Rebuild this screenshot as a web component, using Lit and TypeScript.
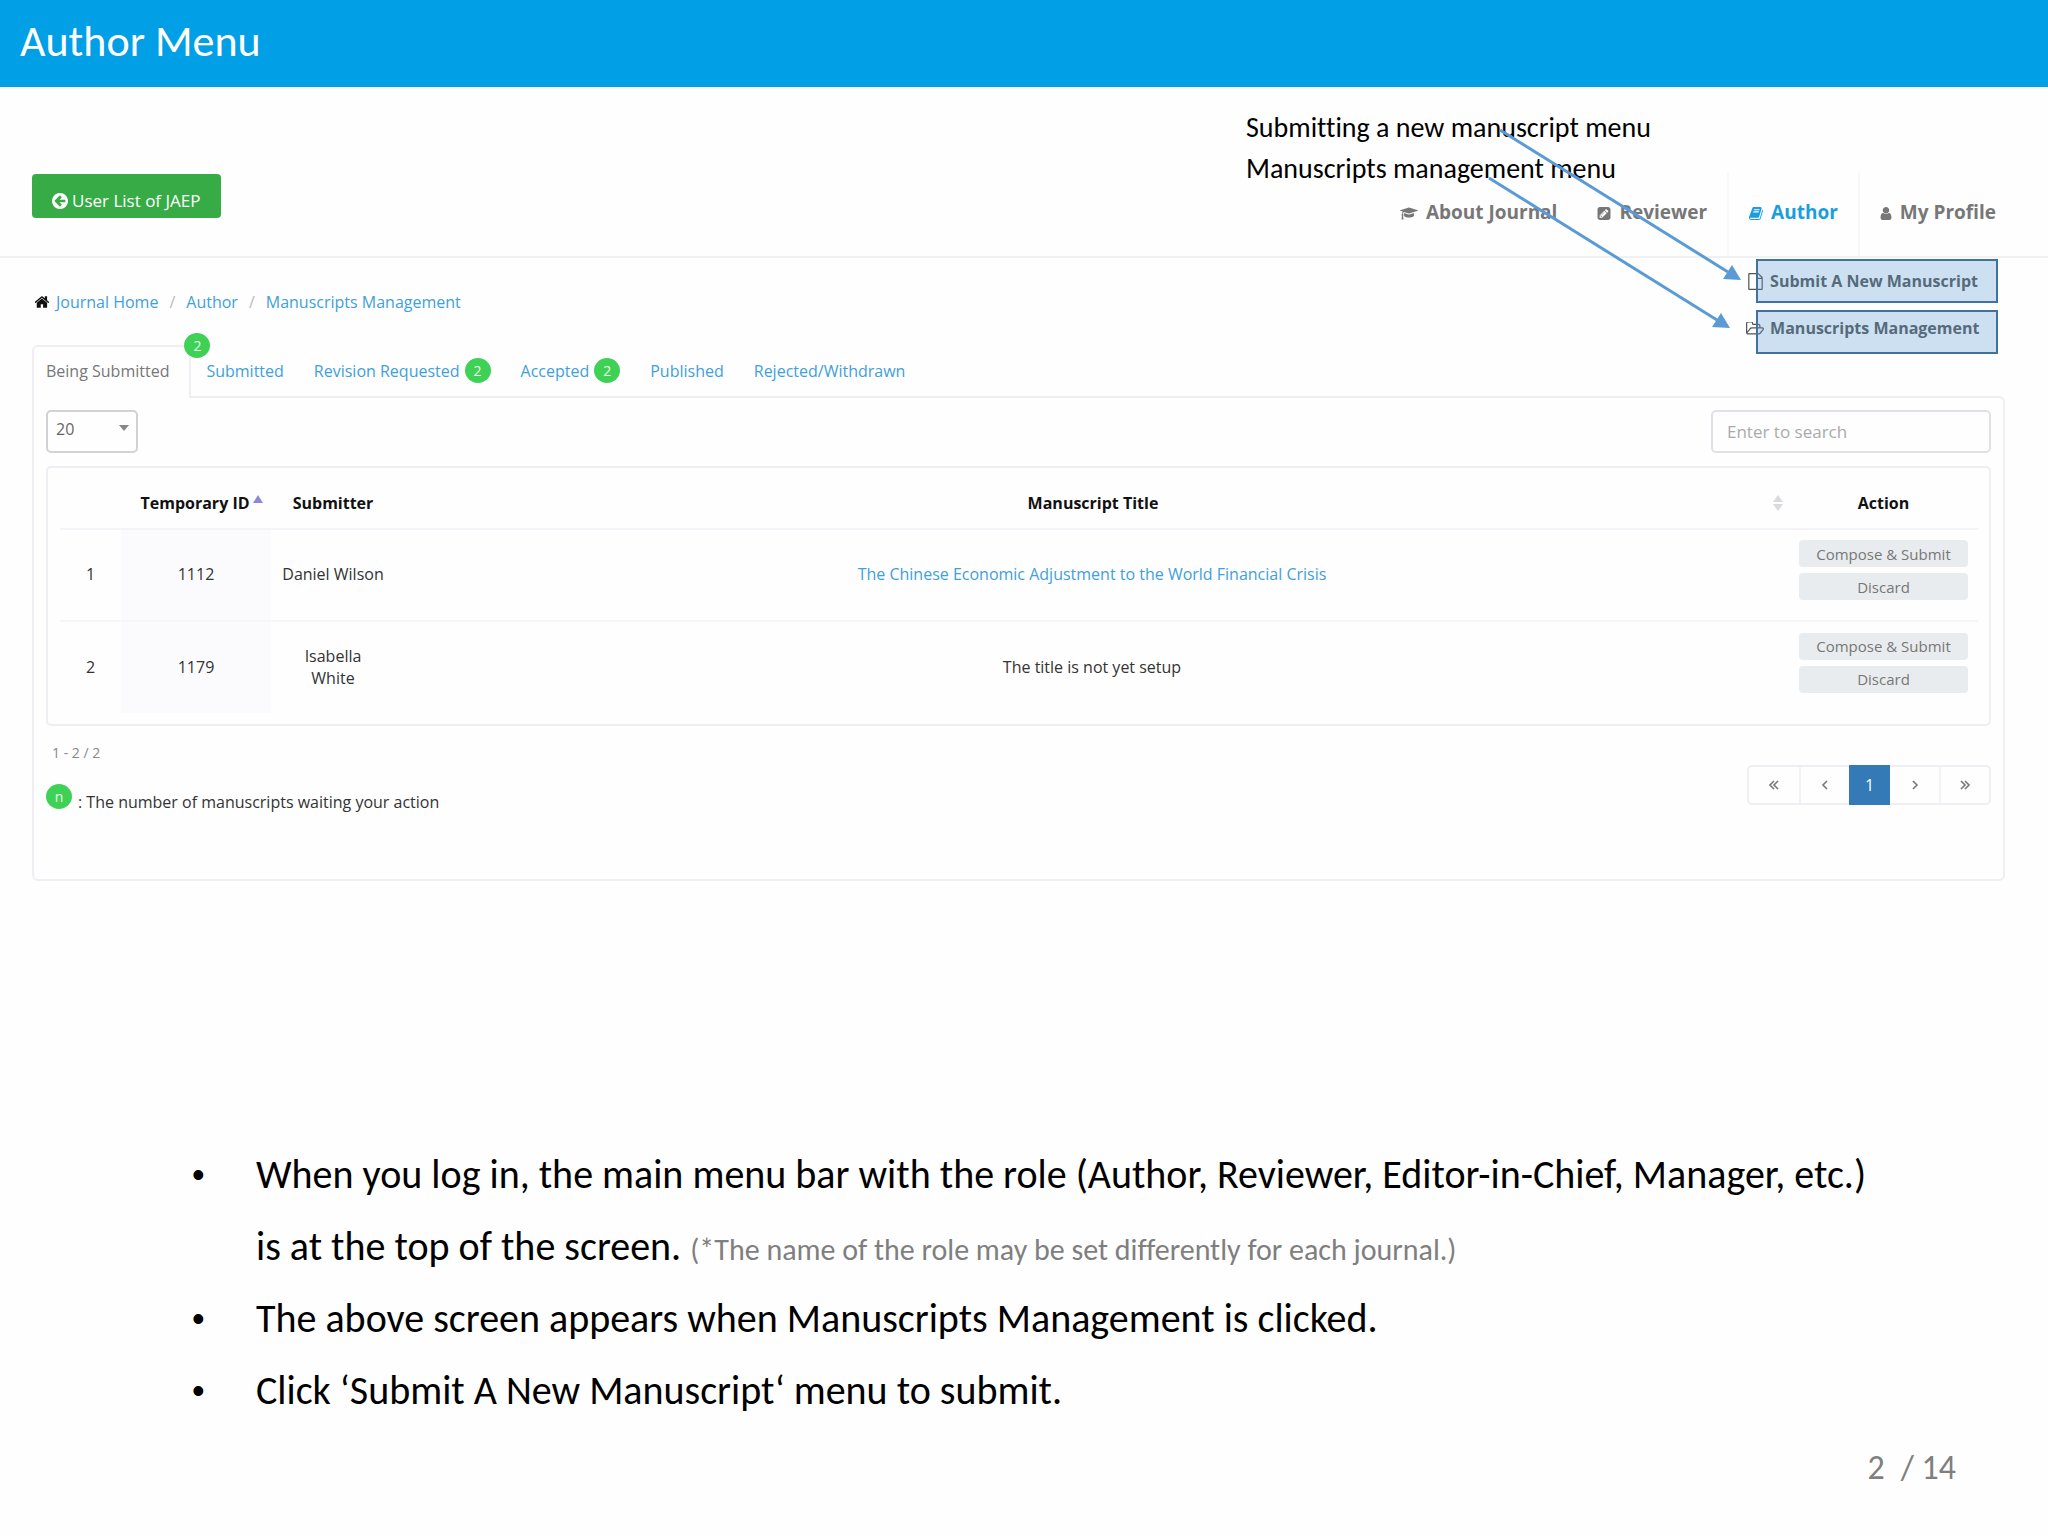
import { LitElement, html, css, nothing } from "lit";
import { customElement, state } from "lit/decorators.js";
import { classMap } from "lit/directives/class-map.js";

interface Glyph {
  box: string;
  d: string;
}

const GLYPHS: Record<string, Glyph> = {
  back: {
    box: "128 128 1536 1536",
    d: "M1408 960v-128q0-26-19-45t-45-19h-502l189-189q19-19 19-45t-19-45l-91-91q-18-18-45-18t-45 18l-362 362-91 91q-18 18-18 45t18 45l91 91 362 362q18 18 45 18t45-18l91-91q18-18 18-45t-18-45l-189-189h502q26 0 45-19t19-45zm256-64q0 209-103 385.5t-279.5 279.5-385.5 103-385.5-103-279.5-279.5-103-385.5 103-385.5 279.5-279.5 385.5-103 385.5 103 279.5 279.5 103 385.5z",
  },
  home: {
    box: "64 240 1664 1300",
    d: "M1408 992v480q0 26-19 45t-45 19h-384v-384h-256v384h-384q-26 0-45-19t-19-45v-480q0-1 .5-3t.5-3l575-474 575 474q1 2 1 6zm223-69l-62 74q-8 9-21 11h-3q-13 0-21-7l-692-577-692 577q-12 8-24 7-13-2-21-11l-62-74q-8-10-7-23.5t11-21.5l719-599q32-26 76-26t76 26l244 204v-195q0-14 9-23t23-9h192q14 0 23 9t9 23v408l219 182q10 8 11 21.5t-7 23.5z",
  },
  cap: {
    box: "0 128 2304 1536",
    d: "M1774 836l18 316q4 69-82 128t-235 93.5-323 34.5-323-34.5-235-93.5-82-128l18-316 574 181q22 7 48 7t48-7zm530-324q0 23-22 31l-1120 352q-4 1-10 1t-10-1l-652-206q-43 34-71 111.5t-34 178.5q63 36 63 109 0 69-58 107l58 433q2 14-8 25-9 11-24 11h-192q-15 0-24-11-10-11-8-25l58-433q-58-38-58-107 0-73 65-111 11-207 98-330l-333-104q-22-8-22-31t22-31l1120-352q4-1 10-1t10 1l1120 352q22 8 22 31z",
  },
  pencil: {
    box: "0 128 1536 1536",
    d: "M404 1108l152 152-52 52h-56v-96h-96v-56zm414-390q14 13-3 30l-291 291q-17 17-30 3-14-13 3-30l291-291q17-17 30-3zm-274 690l544-544-288-288-544 544v288h288zm608-608l92-92q28-28 28-68t-28-68l-152-152q-28-28-68-28t-68 28l-92 92zm384-384v960q0 119-84.5 203.5t-203.5 84.5h-960q-119 0-203.5-84.5t-84.5-203.5v-960q0-119 84.5-203.5t203.5-84.5h960q119 0 203.5 84.5t84.5 203.5z",
  },
  book: {
    box: "64 128 1664 1536",
    d: "M1703 478q40 57 18 129l-275 906q-19 64-76.5 107.5t-122.5 43.5h-923q-77 0-148.5-53.5t-99.5-131.5q-24-67-2-127 0-4 3-27t4-37q1-8-3-21.5t-3-19.5q2-11 8-21t16.5-23.5 16.5-23.5q23-38 45-91.5t30-91.5q3-10 .5-30t-.5-28q3-11 17-28t17-23q21-36 42-92t25-90q1-9-2.5-32t.5-28q4-13 22-30.5t22-22.5q19-26 42.5-84.5t27.5-96.5q1-8-3-25.5t-2-26.5q2-8 9-18t18-23 17-21q8-12 16.5-30.5t15-35 16-36 19.5-32 26.5-23.5 36-11.5 47.5 5.5l-1 3q38-9 51-9h761q74 0 114 56t18 130l-274 906q-36 119-71.5 153.5t-128.5 34.5h-869q-27 0-38 15-11 16-1 43 24 70 144 70h923q29 0 56-15.5t35-41.5l300-987q7-22 5-57 38 15 59 43zm-1064 2q-4 13 2 22.5t20 9.5h608q13 0 25.5-9.5t16.5-22.5l21-64q4-13-2-22.5t-20-9.5h-608q-13 0-25.5 9.5t-16.5 22.5zm-83 256q-4 13 2 22.5t20 9.5h608q13 0 25.5-9.5t16.5-22.5l21-64q4-13-2-22.5t-20-9.5h-608q-13 0-25.5 9.5t-16.5 22.5z",
  },
  user: {
    box: "256 128 1280 1536",
    d: "M1536 1399q0 109-62.5 187t-150.5 78h-854q-88 0-150.5-78t-62.5-187q0-85 8.5-160.5t31.5-152 58.5-131 94-89 134.5-34.5q131 128 313 128t313-128q76 0 134.5 34.5t94 89 58.5 131 31.5 152 8.5 160.5zm-256-887q0 159-112.5 271.5t-271.5 112.5-271.5-112.5-112.5-271.5 112.5-271.5 271.5-112.5 271.5 112.5 112.5 271.5z",
  },
  file: {
    box: "128 0 1536 1792",
    d: "M1596 380q28 28 48 76t20 88v1152q0 40-28 68t-68 28h-1344q-40 0-68-28t-28-68v-1600q0-40 28-68t68-28h896q40 0 88 20t76 48zm-444-244v376h376q-10-29-22-41l-313-313q-12-12-41-22zm384 1528v-1024h-416q-40 0-68-28t-28-68v-416h-768v1536h1280z",
  },
  folder: {
    box: "64 256 1909 1280",
    d: "M1845 931q0-35-53-35h-1088q-40 0-85.5 21.5t-71.5 52.5l-294 363q-18 24-18 40 0 35 53 35h1088q40 0 86-22t71-53l294-363q18-22 18-39zm-1141-163h768v-160q0-40-28-68t-68-28h-576q-40 0-68-28t-28-68v-64q0-40-28-68t-68-28h-320q-40 0-68 28t-28 68v853l256-315q44-53 116-87.5t140-34.5zm1269 163q0 62-46 120l-295 363q-43 53-116 87.5t-140 34.5h-1088q-92 0-158-66t-66-158v-960q0-92 66-158t158-66h320q92 0 158 66t66 158v32h544q92 0 158 66t66 158v160h192q54 0 99 24.5t67 70.5q15 32 15 68z",
  },
};

const icon = (name: string, width: number, height: number) => html`
  <svg class="icon" width=${width} height=${height} viewBox=${GLYPHS[name].box} aria-hidden="true">
    <path fill="currentColor" d=${GLYPHS[name].d}></path>
  </svg>
`;

const chevrons = (path: string) => html`
  <svg class="icon" width="12" height="12" viewBox="0 0 12 12" aria-hidden="true">
    <path d=${path} fill="none" stroke="currentColor" stroke-width="1.6"></path>
  </svg>
`;

const TABS = [
  { label: "Being Submitted", count: 2 },
  { label: "Submitted", count: 0 },
  { label: "Revision Requested", count: 2 },
  { label: "Accepted", count: 2 },
  { label: "Published", count: 0 },
  { label: "Rejected/Withdrawn", count: 0 },
];

const ROWS = [
  {
    id: "1112",
    submitter: "Daniel Wilson",
    title: "The Chinese Economic Adjustment to the World Financial Crisis",
  },
  { id: "1179", submitter: "Isabella\nWhite", title: "" },
];

@customElement("app-root")
export class AppRoot extends LitElement {
  @state() private active = 0;

  static styles = css`
    :host {
      display: block;
      font-family: "Open Sans", "Noto Sans", sans-serif;
      font-size: 16px;
      line-height: 22px;
      color: #333;
    }
    * {
      box-sizing: border-box;
    }
    a {
      color: #3fa0dc;
      text-decoration: none;
    }
    button {
      font: inherit;
      border: 0;
      background: none;
      padding: 0;
      cursor: pointer;
    }
    .icon {
      flex: none;
      display: block;
    }
    .slide {
      position: relative;
      display: flex;
      flex-direction: column;
      min-height: 100vh;
      background: #fefefe;
    }
    .calibri {
      font-family: Carlito, Lato, "Open Sans", sans-serif;
      font-variant-ligatures: none;
    }
    .banner {
      background: #009fe6;
      padding: 13px 20px 18px;
    }
    .banner h1 {
      margin: 0;
      font-size: 44px;
      line-height: 56px;
      font-weight: 400;
      color: #fff;
    }

    /* top bar */
    .topbar {
      display: flex;
      justify-content: space-between;
      align-items: flex-start;
      padding: 85px 32px 0;
      border-bottom: 2px solid #f1f1f3;
    }
    .back {
      display: flex;
      align-items: center;
      gap: 4px;
      margin-top: 2px;
      padding: 16px 20px 6px;
      border-radius: 4px;
      background: #36ab46;
      color: #fff;
      font-size: 17px;
    }
    .menu {
      display: flex;
    }
    .menu-item {
      position: relative;
      border: 0 solid #f8f8fb;
    }
    .menu-item.open {
      border-width: 0 2px;
    }
    .menu-link {
      display: flex;
      align-items: center;
      gap: 8px;
      padding: 28px 20px 32px;
      font-size: 19px;
      line-height: 24px;
      font-weight: 700;
      color: #777;
    }
    .menu-item.open .menu-link {
      color: #1a9edd;
    }
    .menu-link .icon {
      margin-top: 2px;
    }
    .dropdown {
      position: absolute;
      top: 100%;
      left: 0;
      width: 271px;
      display: flex;
      flex-direction: column;
      gap: 7px;
      padding: 3px 0 0 17px;
    }
    .dropdown a {
      position: relative;
      display: flex;
      align-items: center;
      gap: 6px;
      height: 44px;
      font-weight: 700;
      color: #555;
      white-space: nowrap;
    }
    .dropdown a.upper {
      padding-bottom: 8px;
    }
    .dropdown .slot {
      display: flex;
      justify-content: center;
      width: 18px;
    }
    .mark {
      position: absolute;
      inset: 0 2px 0 10px;
      border: 2px solid #41719c;
      background: rgba(91, 155, 213, 0.3);
    }

    /* annotation layer */
    .notes {
      position: absolute;
      top: 107px;
      right: 390px;
      width: 412px;
      margin: 0;
      font-size: 28px;
      line-height: 41px;
      color: #000;
      white-space: nowrap;
    }
    .arrows {
      position: absolute;
      top: 120px;
      right: 298px;
    }

    /* breadcrumb */
    .crumbs {
      display: flex;
      align-items: center;
      gap: 11px;
      padding: 33px 35px 0;
      color: #bbb;
    }
    .crumbs .first {
      display: flex;
      align-items: center;
      gap: 6px;
      color: #111;
    }

    /* tabs and panel */
    .work {
      padding: 32px 43px 0 32px;
    }
    .tabs {
      display: flex;
      align-items: flex-end;
    }
    .tab {
      position: relative;
      display: flex;
      align-items: center;
      gap: 5px;
      height: 51px;
      padding: 0 15px;
      color: #3fa0dc;
    }
    .tab.active {
      z-index: 1;
      height: 53px;
      padding: 0 15px 4px 12px;
      margin-bottom: -2px;
      border: 2px solid #f0eef3;
      border-bottom: 0;
      border-radius: 6px 0 0 0;
      background: #fefefe;
      color: #777;
    }
    .badge {
      display: flex;
      align-items: center;
      justify-content: center;
      width: 26px;
      height: 25px;
      border-radius: 50%;
      background: #3fd155;
      color: #eafbec;
      font-size: 14px;
      line-height: 18px;
    }
    .tab.active .badge {
      position: absolute;
      top: -14px;
      right: -21px;
    }
    .panel {
      border: 2px solid #f0eef3;
      border-radius: 0 6px 6px 6px;
      padding: 12px 12px 66px;
    }
    .tools {
      display: flex;
      justify-content: space-between;
      margin-bottom: 13px;
    }
    .size {
      position: relative;
      width: 92px;
    }
    .size select {
      appearance: none;
      width: 100%;
      height: 43px;
      padding: 0 8px 6px;
      border: 2px solid #d2d2d6;
      border-radius: 5px;
      background: #fefefe;
      font: inherit;
      color: #666;
    }
    .size .icon {
      position: absolute;
      top: 15px;
      right: 9px;
      color: #888;
      pointer-events: none;
    }
    .search {
      width: 280px;
      height: 43px;
      padding: 0 14px;
      border: 2px solid #e2e0e6;
      border-radius: 5px;
      background: #fefefe;
      font: inherit;
      font-size: 17px;
      color: #555;
    }
    .search::placeholder {
      color: #aaa;
      opacity: 1;
    }
    .grid {
      border: 2px solid #f0eef3;
      border-radius: 5px;
      padding: 10px 11px 11px 12px;
    }
    table {
      width: 100%;
      table-layout: fixed;
      border-collapse: collapse;
      text-align: center;
    }
    .c-no {
      width: 61px;
    }
    .c-id {
      width: 150px;
    }
    .c-by {
      width: 124px;
    }
    .c-act {
      width: 189px;
    }
    th {
      height: 51px;
      padding: 0;
      font-weight: 700;
      color: #111;
      border-bottom: 2px solid #f4f4f8;
    }
    td {
      height: 92px;
      padding: 0 10px 2px;
      border-bottom: 2px solid #f6f6fa;
    }
    td.by {
      padding: 0 8px 2px;
      white-space: pre-line;
    }
    tr:last-child td {
      border-bottom: 0;
    }
    td.id {
      background: #fbfbfe;
    }
    .head {
      display: flex;
      align-items: center;
      justify-content: center;
    }
    .head.asc {
      align-items: flex-start;
      gap: 3px;
      padding-left: 11px;
    }
    .head .icon.sort {
      margin-left: auto;
      margin-right: 6px;
    }
    .head .label {
      flex: 1;
      padding-left: 18px;
    }
    .head.asc .icon {
      margin-top: 3px;
    }
    .acts {
      display: flex;
      flex-direction: column;
      gap: 6px;
      padding-bottom: 8px;
    }
    .act {
      height: 27px;
      border-radius: 4px;
      background: #e9ecee;
      color: #777;
      font-size: 15px;
      line-height: 20px;
    }
    .foot {
      display: flex;
      justify-content: space-between;
      align-items: flex-start;
    }
    .range {
      margin: 16px 0 20px;
      padding-left: 6px;
      font-size: 14px;
      line-height: 22px;
      color: #888;
    }
    .legend {
      display: flex;
      align-items: flex-start;
      gap: 6px;
      margin: 0;
    }
    .legend span:last-child {
      padding-top: 7px;
    }
    .pager {
      display: flex;
      margin-top: 39px;
      border: 2px solid #f0eef3;
      border-radius: 5px;
    }
    .pager button {
      display: flex;
      align-items: center;
      justify-content: center;
      width: 50px;
      height: 36px;
      color: #777;
    }
    .pager button + button {
      border-left: 2px solid #f4f2f7;
    }
    .pager button.on {
      width: 41px;
      height: 40px;
      margin: -2px 0;
      border: 0;
      background: #337ab7;
      color: #fff;
    }
    .pager button.on + button {
      border: 0;
      width: 49px;
    }

    /* explanation */
    .points {
      margin: 258px 0 0;
      padding: 0 80px 0 192px;
      list-style: none;
      font-size: 40px;
      line-height: 72px;
      color: #000;
    }
    .points li {
      display: flex;
    }
    .points li::before {
      content: "•";
      flex: none;
      width: 64px;
      font-family: "Liberation Sans", sans-serif;
      font-size: 36px;
    }
    .points small {
      font-size: 30px;
      line-height: 1;
      color: #7f7f7f;
    }
    .page-no {
      display: flex;
      align-items: baseline;
      justify-content: flex-end;
      gap: 16px;
      margin-top: auto;
      padding: 0 92px 48px;
      font-size: 34px;
      line-height: 40px;
      color: #7f7f7f;
    }
  `;

  private renderMenu() {
    return html`
      <nav class="menu" aria-label="Main">
        <div class="menu-item"><a class="menu-link" href="#about">${icon("cap", 18, 13)}About Journal</a></div>
        <div class="menu-item"><a class="menu-link" href="#reviewer">${icon("pencil", 14, 13)}Reviewer</a></div>
        <div class="menu-item open">
          <a class="menu-link" href="#author">${icon("book", 14, 13)}Author</a>
          <div class="dropdown">
            <a href="#submit">
              <span class="slot">${icon("file", 15, 17)}</span>Submit A New Manuscript<span class="mark"></span>
            </a>
            <a class="upper" href="#manage">
              <span class="slot">${icon("folder", 18, 13)}</span>Manuscripts Management<span class="mark"></span>
            </a>
          </div>
        </div>
        <div class="menu-item"><a class="menu-link" href="#profile">${icon("user", 12, 13)}My Profile</a></div>
      </nav>
    `;
  }

  private renderTable() {
    return html`
      <div class="grid">
        <table>
          <colgroup>
            <col class="c-no" /><col class="c-id" /><col class="c-by" /><col /><col class="c-act" />
          </colgroup>
          <thead>
            <tr>
              <th></th>
              <th>
                <div class="head asc">
                  Temporary ID
                  <svg class="icon" width="10" height="8" viewBox="0 0 10 8" aria-hidden="true">
                    <path d="M5 0L10 8H0Z" fill="#8d86dc"></path>
                  </svg>
                </div>
              </th>
              <th>Submitter</th>
              <th>
                <div class="head">
                  <span class="label">Manuscript Title</span>
                  <svg class="icon sort" width="10" height="16" viewBox="0 0 10 16" aria-hidden="true">
                    <path d="M5 0L10 7H0ZM0 9H10L5 16Z" fill="#dadade"></path>
                  </svg>
                </div>
              </th>
              <th>Action</th>
            </tr>
          </thead>
          <tbody>
            ${ROWS.map(
              (row, i) => html`
                <tr>
                  <td>${i + 1}</td>
                  <td class="id">${row.id}</td>
                  <td class="by">${row.submitter}</td>
                  <td>${row.title ? html`<a href="#paper">${row.title}</a>` : "The title is not yet setup"}</td>
                  <td>
                    <div class="acts">
                      <button class="act" type="button">Compose &amp; Submit</button>
                      <button class="act" type="button">Discard</button>
                    </div>
                  </td>
                </tr>
              `
            )}
          </tbody>
        </table>
      </div>
    `;
  }

  render() {
    return html`
      <div class="slide">
        <header class="banner calibri"><h1>Author Menu</h1></header>

        <div class="topbar">
          <a class="back" href="#users">${icon("back", 16, 16)}User List of JAEP</a>
          ${this.renderMenu()}
        </div>

        <nav class="crumbs" aria-label="Breadcrumb">
          <span class="first">${icon("home", 15, 12)}<a href="#home">Journal Home</a></span>
          <span>/</span>
          <a href="#author">Author</a>
          <span>/</span>
          <a href="#manage">Manuscripts Management</a>
        </nav>

        <main class="work">
          <div class="tabs" role="tablist">
            ${TABS.map(
              (tab, i) => html`
                <button
                  type="button"
                  role="tab"
                  aria-selected=${i === this.active ? "true" : "false"}
                  class=${classMap({ tab: true, active: i === this.active })}
                  @click=${() => (this.active = i)}
                >
                  ${tab.label}${tab.count ? html`<span class="badge">${tab.count}</span>` : nothing}
                </button>
              `
            )}
          </div>

          <section class="panel">
            <div class="tools">
              <div class="size">
                <select aria-label="Rows per page">
                  <option>20</option>
                </select>
                <svg class="icon" width="10" height="6" viewBox="0 0 10 6" aria-hidden="true">
                  <path d="M0 0H10L5 6Z" fill="currentColor"></path>
                </svg>
              </div>
              <input class="search" type="search" placeholder="Enter to search" aria-label="Search manuscripts" />
            </div>

            ${this.renderTable()}

            <div class="foot">
              <div>
                <p class="range">1 - 2 / 2</p>
                <p class="legend">
                  <span class="badge">n</span><span>: The number of manuscripts waiting your action</span>
                </p>
              </div>
              <div class="pager">
                <button type="button" aria-label="First page">${chevrons("M6 2L2 6L6 10M10 2L6 6L10 10")}</button>
                <button type="button" aria-label="Previous page">${chevrons("M8 2L4 6L8 10")}</button>
                <button type="button" class="on">1</button>
                <button type="button" aria-label="Next page">${chevrons("M4 2L8 6L4 10")}</button>
                <button type="button" aria-label="Last page">${chevrons("M2 2L6 6L2 10M6 2L10 6L6 10")}</button>
              </div>
            </div>
          </section>
        </main>

        <ul class="points calibri">
          <li>
            <div>
              When you log in, the main menu bar with the role (Author, Reviewer, Editor-in-Chief, Manager, etc.)<br />is
              at the top of the screen. <small>(*The name of the role may be set differently for each journal.)</small>
            </div>
          </li>
          <li><div>The above screen appears when Manuscripts Management is clicked.</div></li>
          <li><div>Click ‘Submit A New Manuscript‘ menu to submit.</div></li>
        </ul>

        <footer class="page-no calibri"><span>2</span><span>/ 14</span></footer>

        <p class="notes calibri">Submitting a new manuscript menu<br />Manuscripts management menu</p>
        <svg class="arrows" width="270" height="220" viewBox="0 0 270 220" aria-hidden="true">
          <g fill="#5b9bd5" stroke="#5b9bd5">
            <path d="M20 10L248 152M9 58L237 200" stroke-width="3" fill="none"></path>
            <path d="M252 145L261 160L243 159ZM241 193L250 208L232 207Z" stroke="none"></path>
          </g>
        </svg>
      </div>
    `;
  }
}
